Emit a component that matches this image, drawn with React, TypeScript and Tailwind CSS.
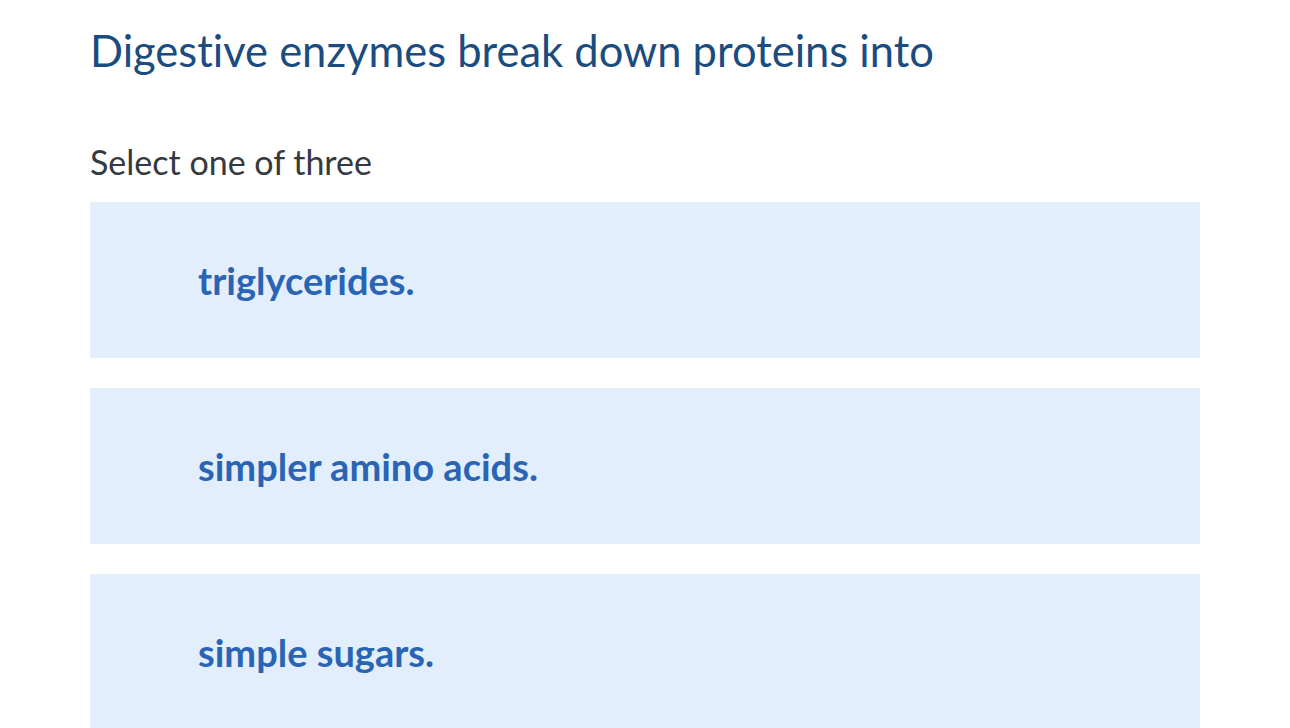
const options = ['triglycerides.', 'simpler amino acids.', 'simple sugars.'];

export default function App() {
  return (
    <div className="min-h-screen bg-white font-['Lato','Noto_Sans',sans-serif] [font-variant-ligatures:none]">
      <div className="px-[90px] pt-[22px]">
        <h1 className="text-[43.5px] leading-[56px] text-[#1b4c80] font-normal">
          Digestive enzymes break down proteins into
        </h1>
        <p className="mt-[64px] text-[34px] leading-[40px] text-[#343a40]">Select one of three</p>
        <div className="mt-[20px] flex flex-col gap-[30px] w-[1110px]">
          {options.map((o) => (
            <button
              key={o}
              className="h-[156px] bg-[#e3eefd] flex items-center pl-[108px] text-left"
            >
              <span className="text-[38px] font-bold text-[#2a64b4]">{o}</span>
            </button>
          ))}
        </div>
      </div>
    </div>
  );
}
